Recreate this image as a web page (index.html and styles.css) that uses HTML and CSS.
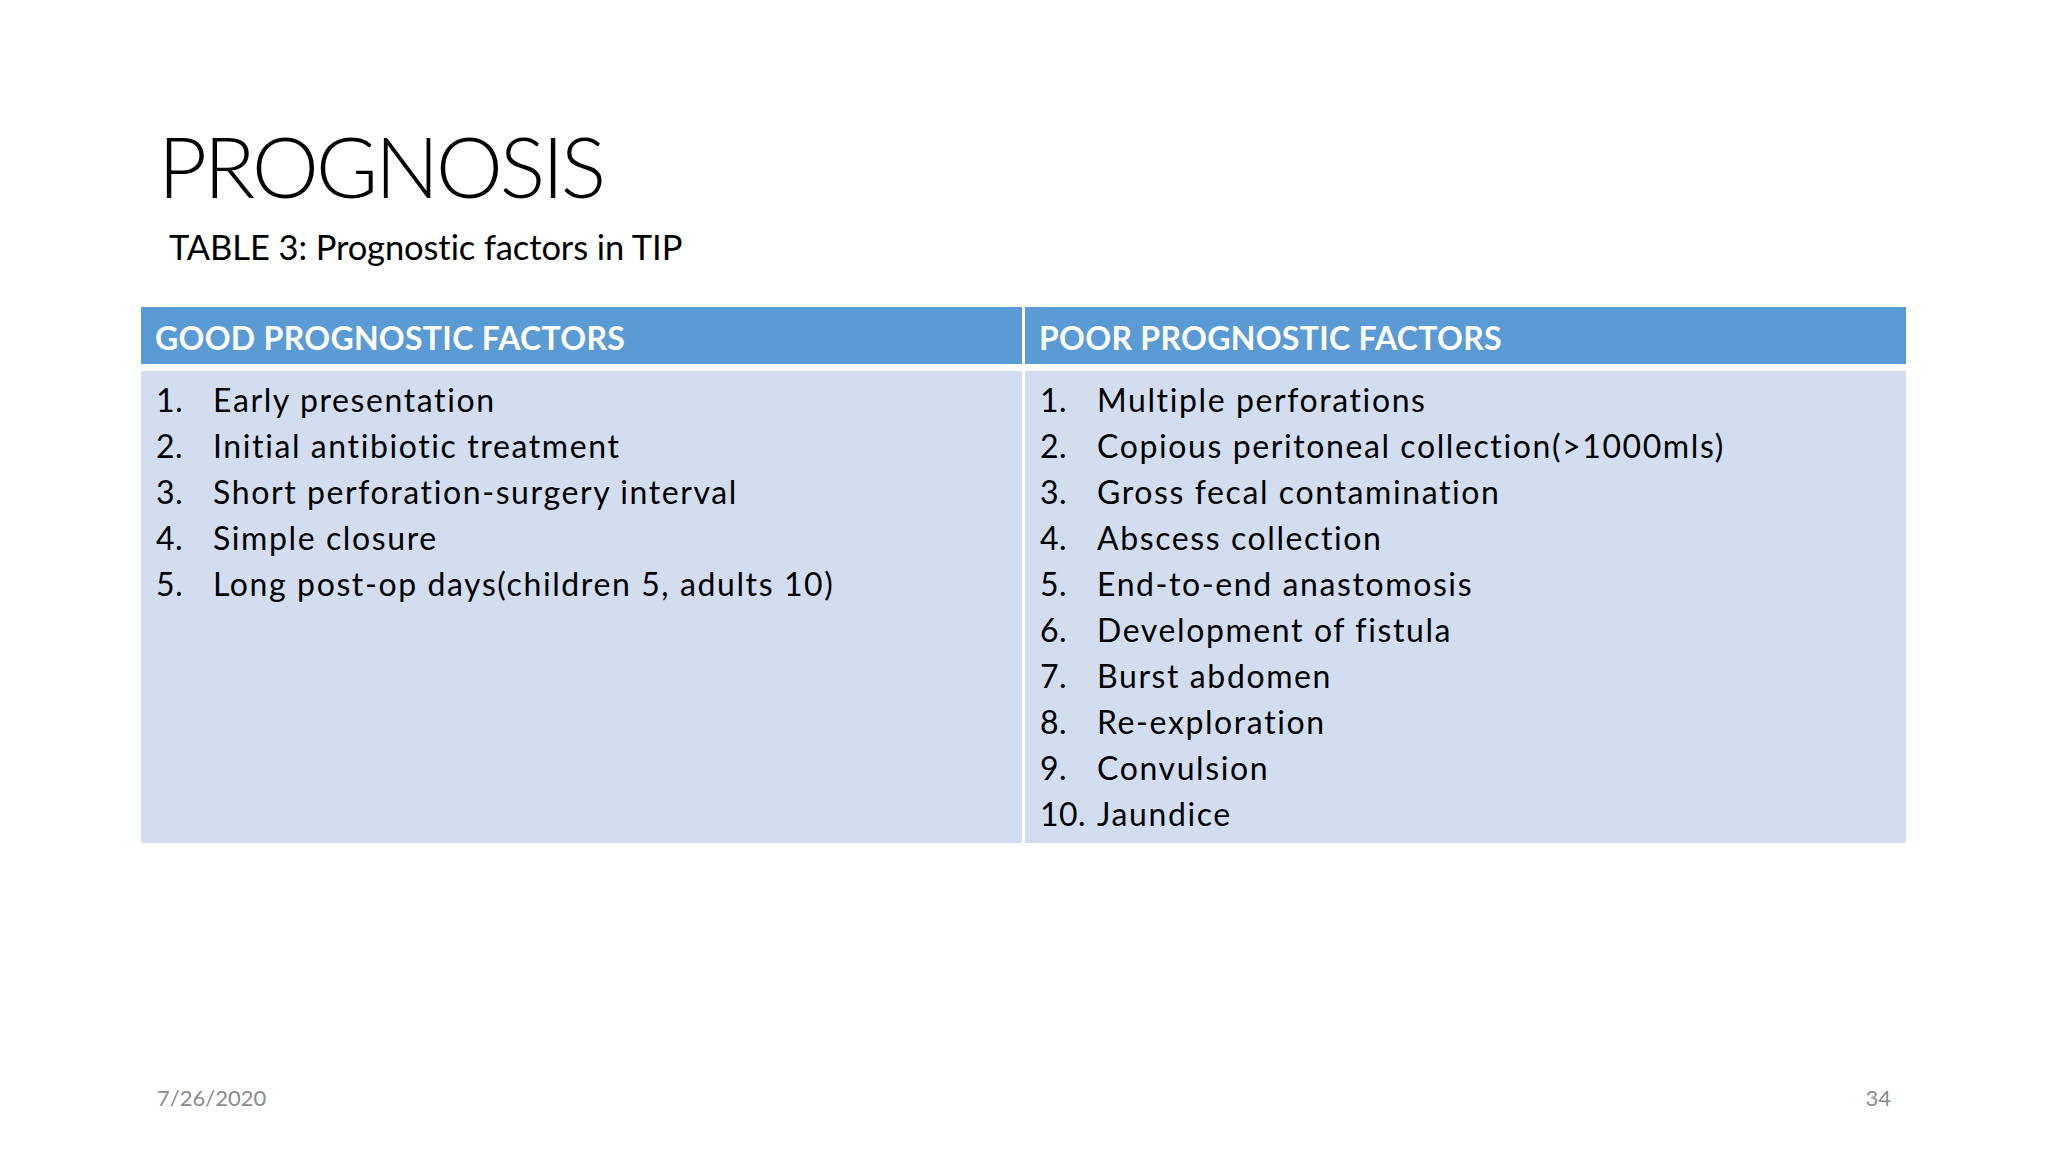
FILE: index.html
```html
<!DOCTYPE html>
<html lang="en">
<head>
<meta charset="utf-8">
<title>PROGNOSIS</title>
<link rel="stylesheet" href="styles.css">
</head>
<body>
<div class="slide">
  <h1 class="title">PROGNOSIS</h1>
  <p class="subtitle">TABLE 3: Prognostic factors in TIP</p>
  <div class="table">
    <div class="head">GOOD PROGNOSTIC FACTORS</div>
    <div class="head">POOR PROGNOSTIC FACTORS</div>
    <div class="cell">
      <ol class="list">
        <li><span class="num">1.</span><span>Early presentation</span></li>
        <li><span class="num">2.</span><span>Initial antibiotic treatment</span></li>
        <li><span class="num">3.</span><span>Short perforation-surgery interval</span></li>
        <li><span class="num">4.</span><span>Simple closure</span></li>
        <li><span class="num">5.</span><span>Long post-op days(children 5, adults 10)</span></li>
      </ol>
    </div>
    <div class="cell">
      <ol class="list">
        <li><span class="num">1.</span><span>Multiple perforations</span></li>
        <li><span class="num">2.</span><span>Copious peritoneal collection(&gt;1000mls)</span></li>
        <li><span class="num">3.</span><span>Gross fecal contamination</span></li>
        <li><span class="num">4.</span><span>Abscess collection</span></li>
        <li><span class="num">5.</span><span>End-to-end anastomosis</span></li>
        <li><span class="num">6.</span><span>Development of fistula</span></li>
        <li><span class="num">7.</span><span>Burst abdomen</span></li>
        <li><span class="num">8.</span><span>Re-exploration</span></li>
        <li><span class="num">9.</span><span>Convulsion</span></li>
        <li><span class="num">10.</span><span>Jaundice</span></li>
      </ol>
    </div>
  </div>
  <div class="footer">
    <span class="date">7/26/2020</span>
    <span class="page">34</span>
  </div>
</div>
</body>
</html>
```

FILE: styles.css
```css
html, body {
  margin: 0;
  padding: 0;
  background: #ffffff;
}

.slide {
  width: 2048px;
  height: 1152px;
  box-sizing: border-box;
  display: flex;
  flex-direction: column;
  font-family: "Lato", "Liberation Sans", sans-serif;
  color: #000000;
  overflow: hidden;
}

.title {
  margin: 123px 0 0 158px;
  font-size: 85px;
  line-height: 85px;
  font-weight: 300;
  letter-spacing: -3.3px;
}

.subtitle {
  margin: 21px 0 0 169px;
  font-size: 34.5px;
  line-height: 36px;
  font-weight: 400;
  letter-spacing: -0.1px;
}

.table {
  margin: 42px 0 0 141px;
  width: 1765px;
  display: grid;
  grid-template-columns: 1fr 1fr;
  gap: 7px 3px;
}

.head {
  background: #5b9bd5;
  color: #ffffff;
  font-weight: 700;
  font-size: 32px;
  line-height: 32px;
  letter-spacing: 0.3px;
  padding: 15px 14px 10px;
}

.cell {
  background: #d2deef;
  padding: 6px 14px 6px 15px;
}

.list {
  list-style: none;
  margin: 0;
  padding: 0;
  font-size: 32px;
  line-height: 46px;
  letter-spacing: 1.6px;
}

.list li {
  display: grid;
  grid-template-columns: 57px 1fr;
}

.num {
  letter-spacing: 0.5px;
}

.footer {
  margin-top: auto;
  padding: 0 157px 42px 157px;
  display: flex;
  justify-content: space-between;
  font-size: 22px;
  line-height: 24px;
  color: #8a8a8a;
}
```
